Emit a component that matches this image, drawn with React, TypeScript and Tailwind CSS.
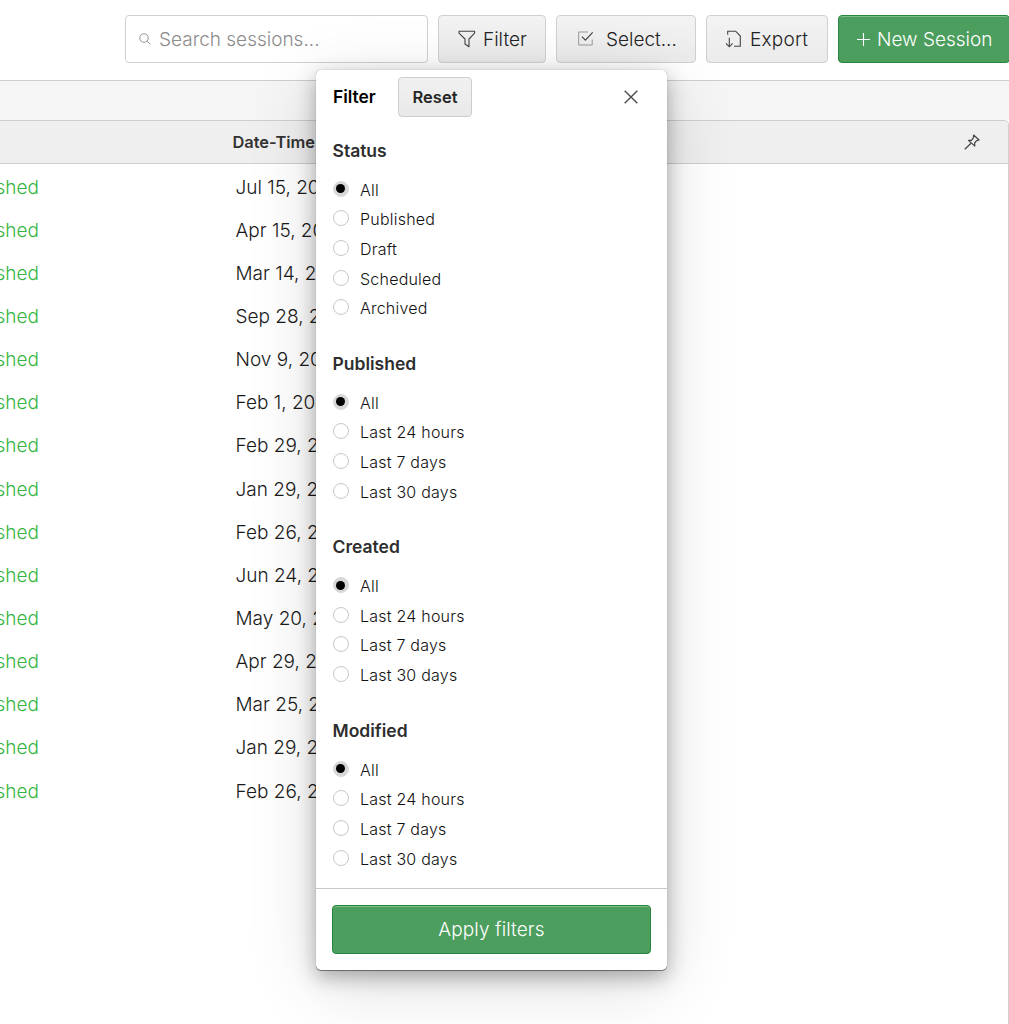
import React from 'react';
import clsx from 'clsx';

const rows = [
  'Jul 15, 2024',
  'Apr 15, 2024',
  'Mar 14, 2024',
  'Sep 28, 2023',
  'Nov 9, 2023',
  'Feb 1, 2024',
  'Feb 29, 2024',
  'Jan 29, 2024',
  'Feb 26, 2024',
  'Jun 24, 2024',
  'May 20, 2024',
  'Apr 29, 2024',
  'Mar 25, 2024',
  'Jan 29, 2024',
  'Feb 26, 2024',
];

const periods = ['All', 'Last 24 hours', 'Last 7 days', 'Last 30 days'];

const filterGroups = [
  { title: 'Status', options: ['All', 'Published', 'Draft', 'Scheduled', 'Archived'] },
  { title: 'Published', options: periods },
  { title: 'Created', options: periods },
  { title: 'Modified', options: periods },
];

const grayButton =
  'flex h-12 shrink-0 items-center rounded-[4px] border border-[#d0d0d0] bg-linear-to-b from-[#f3f3f3] to-[#ebebeb] text-[#222]';

const greenButton =
  'flex items-center rounded-[4px] border border-[#28843c] bg-[#4b9e5d] text-white shadow-[inset_0_1px_0_#7fbd8b]';

const SearchIcon = () => (
  <svg width="12" height="12" viewBox="0 0 12 12" fill="none" stroke="#8a8a8a" strokeWidth="0.9">
    <circle cx="5" cy="5" r="4.3" />
    <path d="M8.1 8.1l3.3 3.3" />
  </svg>
);

const FunnelIcon = () => (
  <svg width="18" height="18" viewBox="0 0 18 18" fill="none" stroke="#444" strokeWidth="1.1" strokeLinejoin="round">
    <path d="M1 1.2h15.6v2L11 9v7.8L7 14V9L1 3.2z" />
  </svg>
);

const CheckIcon = () => (
  <svg width="17" height="17" viewBox="0 0 17 17" fill="none" className="-mt-[2px]">
    <path d="M11 2H1.7v13h13.5V9.5" stroke="#999" strokeWidth="1" />
    <path d="M4.9 6.6l3.5 3.6 7.3-7.8" stroke="#444" strokeWidth="1.2" />
  </svg>
);

const ExportIcon = () => (
  <svg width="17" height="18" viewBox="0 0 17 18" fill="none" stroke="#444" strokeWidth="1.1">
    <path d="M2.7 4.8V1.2h8L15.3 6v10.3H9" />
    <path d="M4.3 7.7v9M1 13.4l3.3 3.4 3.3-3.4" />
  </svg>
);

const PinIcon = () => (
  <svg width="16" height="16" viewBox="0 0 16 16" fill="none" stroke="#444" strokeWidth="1.2" strokeLinejoin="round">
    <path d="M9.6 1l5.5 5-2.5.6-2 2.4.2 3.1-6.3-5.7 3-.1 1.9-2.5z" />
    <path d="M7 9.2L.8 15.2" />
  </svg>
);

const Radio: React.FC<{ label: string; checked: boolean }> = ({ label, checked }) => (
  <label className="flex h-[29.7px] items-center gap-[11.5px] text-[16px] font-light tracking-[0.22px] text-[#111]">
    <span
      className={clsx(
        '-mt-[2px] flex size-4 shrink-0 items-center justify-center rounded-full border',
        checked ? 'border-[#d8d8d8] bg-[#d8d8d8]' : 'border-[#c8c8c8] bg-white'
      )}
    >
      {checked && <span className="size-[9px] rounded-full bg-black" />}
    </span>
    {label}
  </label>
);

const Toolbar = () => (
  <div className="flex h-[80px] items-start pt-[15px] pl-[125px] text-[19px] leading-none font-light whitespace-nowrap">
    <div className="mr-[10px] flex h-12 w-[303px] shrink-0 items-center gap-[8px] rounded-[4px] border border-[#d0d0d0] bg-white pl-[13px] text-[#8c8c8c]">
      <SearchIcon />
      Search sessions...
    </div>
    <button className={clsx(grayButton, 'mr-[10px] w-[108px] gap-[7px] pl-[19px]')}>
      <FunnelIcon />
      Filter
    </button>
    <button className={clsx(grayButton, 'mr-[10px] w-[140px] gap-[12px] pl-[20px]')}>
      <CheckIcon />
      Select...
    </button>
    <button className={clsx(grayButton, 'mr-[10px] w-[122px] gap-[8px] pl-[18px] tracking-[0.2px]')}>
      <ExportIcon />
      Export
    </button>
    <button className={clsx(greenButton, 'h-12 w-[172px] shrink-0 gap-[7px] pl-[18px]')}>
      <svg width="13" height="13" viewBox="0 0 13 13" stroke="#fff" strokeWidth="1.1">
        <path d="M6.5 0v13M0 6.5h13" />
      </svg>
      New Session
    </button>
  </div>
);

const FilterPanel = () => (
  <div className="absolute top-[70px] left-[316px] flex h-[900px] w-[351px] flex-col rounded-[5px] bg-white shadow-[0_0_1px_rgba(0,0,0,0.4),0_1px_0_rgba(0,0,0,0.4),0_7px_20px_rgba(0,0,0,0.3),0_14px_70px_rgba(0,0,0,0.14)]">
    <div className="flex h-[54px] items-center px-[17px] text-[16.5px] font-semibold">
      <h2 className="w-[65px] text-[17.4px] text-black">Filter</h2>
      <button className="h-10 w-[74px] rounded-[4px] border border-[#cdcdcd] bg-linear-to-b from-[#f1f1f1] to-[#e9e9e9] text-[#262626]">
        Reset
      </button>
      <button className="mr-[12.5px] ml-auto" aria-label="Close">
        <svg width="14" height="14" viewBox="0 0 14 14" stroke="#4a4a4a" strokeWidth="1.4">
          <path d="M.7.7l12.6 12.6M13.3.7L.7 13.3" />
        </svg>
      </button>
    </div>

    <div className="flex grow flex-col gap-[27.5px] pt-[13.5px] pr-[17px] pl-[16.5px]">
      {filterGroups.map((group) => (
        <div key={group.title}>
          <h3 className="mb-[12.2px] h-[25px] pt-[0.4px] text-[17.5px] leading-[25px] font-semibold text-[#2e2e2e]">
            {group.title}
          </h3>
          {group.options.map((option, i) => (
            <Radio key={option} label={option} checked={i === 0} />
          ))}
        </div>
      ))}
    </div>

    <div className="border-t border-[#c8c8c8] px-4 pt-4 pb-4">
      <button
        className={clsx(greenButton, 'h-[49px] w-full justify-center pt-[2px] text-[19px] font-light tracking-[0.1px]')}
      >
        Apply filters
      </button>
    </div>
  </div>
);

export default function App() {
  return (
    <div className="relative h-[1024px] w-[1009px] overflow-hidden bg-white font-['Inter',sans-serif]">
      <Toolbar />

      <div className="h-[40px] border-t border-[#cecece] bg-[#f5f5f5]" />

      <div className="h-[904px] rounded-tr-[5px] border-t border-r border-[#cecece] bg-white">
        <div className="mb-[2.3px] flex h-[43px] items-center rounded-tr-[4px] border-b border-[#cecece] bg-[#efefef]">
          <span className="ml-[232.5px] text-[16.4px] font-semibold text-[#333]">Date-Time</span>
          <span className="mr-[28px] ml-auto">
            <PinIcon />
          </span>
        </div>
        {rows.map((date, i) => (
          <div key={i} className="flex h-[43.15px] items-center text-[19px] font-light whitespace-nowrap">
            <div className="flex w-[39px] shrink-0 justify-end text-[#36b542]">Published</div>
            <div className="ml-[196.5px] text-[#1a1a1a]">{date}</div>
          </div>
        ))}
      </div>

      <FilterPanel />
    </div>
  );
}
